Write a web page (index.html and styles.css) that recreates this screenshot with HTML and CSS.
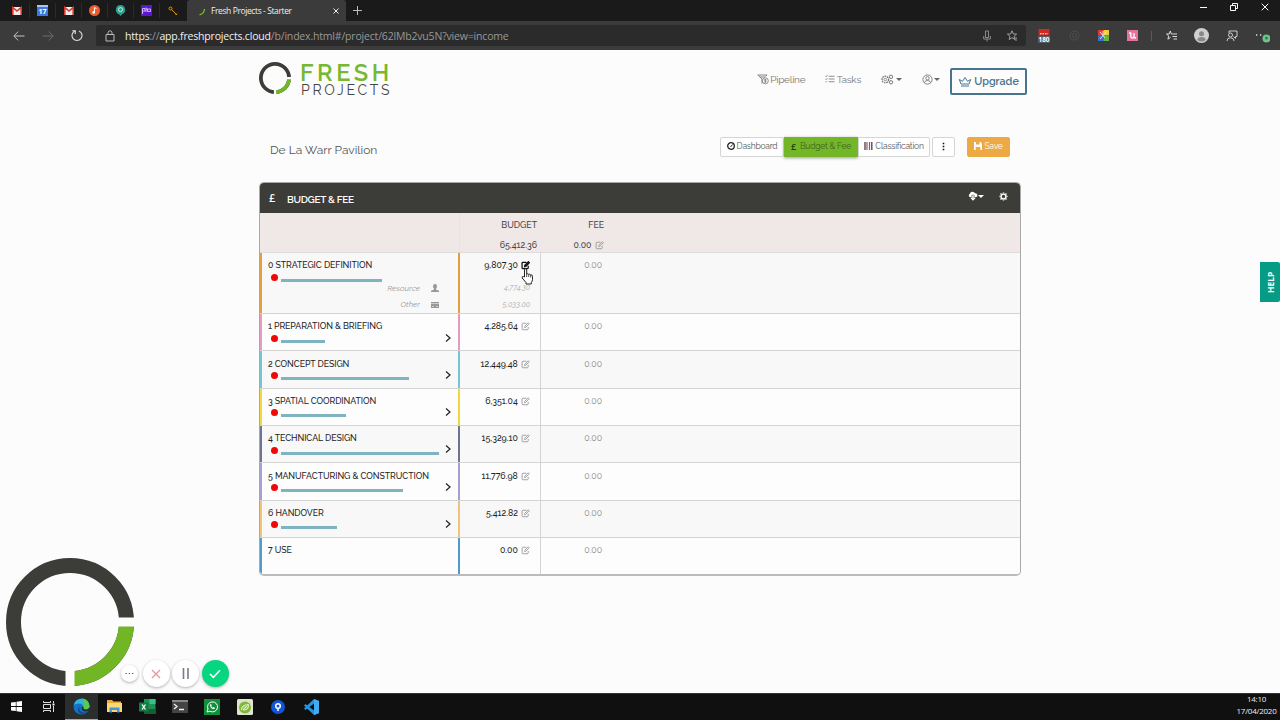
FILE: index.html
```html
<!DOCTYPE html>
<html lang="en">
<head>
<meta charset="utf-8">
<title>Fresh Projects - Starter</title>
<link rel="stylesheet" href="styles.css">
</head>
<body>
<svg width="0" height="0" class="defs">
  <symbol id="edit" viewBox="0 0 10 10"><path d="M6 1.4H2.2Q1.2 1.4 1.2 2.4V7.6Q1.2 8.6 2.2 8.6H7Q8 8.6 8 7.6V5.4M4 6.2L4.2 4.8L8.2.8L9.3 1.9L5.3 5.9Z" fill="none" stroke="currentColor"/></symbol>
  <symbol id="chev" viewBox="0 0 6 8"><path d="M1 .5L5 4L1 7.5" fill="none" stroke="#222" stroke-width="1.2"/></symbol>
  <symbol id="ring" viewBox="0 0 128 128"><circle cx="64" cy="64" r="56.5" fill="none" stroke="#3c3c39" stroke-width="15"/><path d="M120.500 64A56.500 56.500 0 0 1 64 120.500" fill="none" stroke="#72b626" stroke-width="15"/><path d="M64 64H129M64 64V129" stroke="#fcfcfc" stroke-width="9"/></symbol>
  <symbol id="mail" viewBox="0 0 10 10"><path d="M0 1H10V9H0Z" fill="#eee"/><path d="M.8 9V1.500L5 5L9.200 1.500V9" fill="none" stroke="#d8382c" stroke-width="1.600"/></symbol>
</svg>

<div class="tabs">
  <div class="pin"><svg width="10" height="10"><use href="#mail"/></svg></div>
  <div class="pin"><svg width="11" height="11" viewBox="0 0 11 11"><path d="M0 0H11V11H0Z" fill="#3b78e0"/><path d="M0 0H11V2H0Z" fill="#a9c5f5"/><text x="5.500" y="9" font-size="7" font-weight="bold" text-anchor="middle" fill="#fff">17</text></svg></div>
  <div class="pin"><svg width="10" height="10"><use href="#mail"/></svg></div>
  <div class="pin"><svg width="11" height="11" viewBox="0 0 11 11"><circle cx="5.500" cy="5.500" r="5.500" fill="#f15a29"/><path d="M5.500 7.500V2.500L7.500 3.500" stroke="#fff" fill="none"/><circle cx="4.700" cy="7.400" r="1.300" fill="#fff"/></svg></div>
  <div class="pin"><svg width="11" height="11" viewBox="0 0 11 11"><path d="M5.500 0A4.800 4.800 0 0 1 7 9.300L5.500 11L4 9.300A4.800 4.800 0 0 1 5.500 0Z" fill="#2aa18d"/><circle cx="5.500" cy="4.600" r="2" fill="none" stroke="#c8eee6"/></svg></div>
  <div class="pin"><svg width="11" height="11" viewBox="0 0 11 11"><path d="M0 0H11V11H0Z" fill="#5a17cf"/><path d="M1.500 9V3.500H4V6H1.500M5 7V2.500M5 4H9.500V6.500H6.500V4" fill="none" stroke="#d9c4ff" stroke-width=".9"/></svg></div>
  <div class="pin"><svg width="10" height="10" viewBox="0 0 10 10"><circle cx="2.500" cy="2.500" r="1.500" fill="none" stroke="#d99a1c"/><path d="M3.600 3.600L9 9M7.500 9L9 7.500" stroke="#d99a1c" fill="none"/></svg></div>
  <div class="tab">
    <svg width="8" height="10" viewBox="0 0 8 10"><path d="M6.500 3Q6.500 7.500 1.500 8.800" fill="none" stroke="#76b82a" stroke-width="1.300"/></svg>
    <span class="tab-title">Fresh Projects - Starter</span>
    <svg class="tab-x" width="6" height="6" viewBox="0 0 6 6"><path d="M.5 .5L5.500 5.500M5.500 .5L.5 5.500" stroke="#eee"/></svg>
  </div>
  <svg class="plus" width="9" height="9" viewBox="0 0 9 9"><path d="M4.500 0V9M0 4.500H9" stroke="#bbb"/></svg>
  <div class="win">
    <svg width="7" height="8" viewBox="0 0 7 8"><path d="M0 4.500H7" stroke="#fff"/></svg>
    <svg width="8" height="8" viewBox="0 0 8 8"><path d="M.5 2.500H5.500V7.500H.5ZM2.500 2.500V.5H7.500V5.500H5.500" fill="none" stroke="#fff"/></svg>
    <svg width="8" height="8" viewBox="0 0 8 8"><path d="M.7 .7L7.300 7.300M7.300 .7L.7 7.300" stroke="#fff"/></svg>
  </div>
</div>

<div class="toolbar">
  <svg class="back" width="12" height="10" viewBox="0 0 12 10"><path d="M11.500 5H1M5.200 .6L.8 5L5.200 9.400" fill="none" stroke="#c4c4c4"/></svg>
  <svg class="fwd" width="12" height="10" viewBox="0 0 12 10"><path d="M.5 5H11M6.800 .6L11.200 5L6.800 9.400" fill="none" stroke="#6e6e6e"/></svg>
  <svg class="reload" width="12" height="13" viewBox="0 0 12 13"><path d="M4 1.900A5 5 0 1 0 8 1.900M4.300 5V1.700H1.300" fill="none" stroke="#ddd" stroke-width="1.100"/></svg>
  <div class="address">
    <svg width="10" height="12" viewBox="0 0 10 12"><path d="M1 4.500H9V11H1ZM3 4.500V2.800A2 2 0 0 1 7 2.800V4.500" fill="none" stroke="#bbb"/></svg>
    <span class="url"><b>https</b>://<b>app.freshprojects.cloud</b>/b/index.html#/project/62lMb2vu5N?view=income</span>
    <svg class="mic" width="8" height="12" viewBox="0 0 8 12"><path d="M2.500 1H5.500V7.500H2.500ZM.7 6V9H7.300V6M4 9V11.500" fill="none" stroke="#8a8a8a"/></svg>
    <svg class="star" width="11" height="11" viewBox="0 0 11 11"><path d="M5 .8L6.300 3.900L9.600 4.100L7.100 6.300L7.800 9.500L5 7.700L2.200 9.500L2.900 6.300L.4 4.100L3.700 3.900ZM9 7V11" fill="none" stroke="#aaa" stroke-width=".9"/></svg>
  </div>
  <div class="ext">
    <svg width="14" height="16" viewBox="0 0 14 16"><path d="M1.500 1H12.500V7H1.500Z" fill="#cf2a22"/><path d="M3 5.800H11" stroke="#fff" stroke-dasharray="1.500 1"/><path d="M1 7.500H13V15H1Z" fill="#5a5a5a"/><text x="7" y="13.700" font-size="6.500" font-weight="bold" text-anchor="middle" fill="#fff">180</text></svg>
    <svg width="11" height="11" viewBox="0 0 11 11"><circle cx="5.500" cy="5.500" r="4.500" fill="none" stroke="#505050"/><circle cx="5.500" cy="5.500" r="2" fill="none" stroke="#505050"/></svg>
    <svg width="11" height="11" viewBox="0 0 11 11"><path d="M0 0H5.500V5.500H0Z" fill="#e33b34"/><path d="M5.500 0H11V5.500H5.500Z" fill="#f4ca3a"/><path d="M0 5.500H5.500V11H0Z" fill="#3f6fd0"/><path d="M5.500 5.500H11V11H5.500Z" fill="#63b345"/><path d="M2 2L7 8M8.500 1.500L2 9M5 1V5" stroke="#eee" stroke-width=".9"/></svg>
    <svg width="11" height="11" viewBox="0 0 11 11"><path d="M0 0H11V11H0Z" fill="#e3739c"/><path d="M2 3H3.800V6Q3.800 8 5.300 8Q7 8 7 6V3M7 7.500L9 8" fill="none" stroke="#fff" stroke-width="1.300"/></svg>
  </div>
  <div class="sep"></div>
  <div class="ext2">
    <svg width="11" height="11" viewBox="0 0 11 11"><path d="M6.500 4H5.300L4.300 1L3.200 4H.5L2.700 6L1.900 9.200L4.500 7.400M6.500 4H11M6.500 6.500H11M7.500 9H11" fill="none" stroke="#ddd"/></svg>
    <svg width="15" height="15" viewBox="0 0 15 15"><circle cx="7.500" cy="7.500" r="7.500" fill="#cfcfcf"/><circle cx="7.500" cy="5.800" r="2.500" fill="#888"/><path d="M3.200 12Q3.500 9 7.500 9T11.800 12Q7.500 15 3.200 12" fill="#888"/></svg>
    <svg width="12" height="12" viewBox="0 0 12 12"><path d="M3 3V1H11V6.500H9.500V8.500L7.500 6.500" fill="none" stroke="#ccc"/><circle cx="4.500" cy="5" r="2" fill="none" stroke="#ccc"/><path d="M1 11Q1 7.800 4.500 7.800T8 11" fill="none" stroke="#ccc"/></svg>
    <svg width="15" height="15" viewBox="0 0 15 15"><path d="M1 7H7" stroke="#ddd" stroke-width="1.300" stroke-dasharray="1.300 2.700"/><circle cx="11.500" cy="10.500" r="4" fill="#6fc48c"/><circle cx="11.500" cy="10" r="1.500" fill="#33804d"/></svg>
  </div>
</div>

<main class="page">
  <header class="top">
    <svg class="logo-ring" width="32" height="32"><use href="#ring"/></svg>
    <div class="logo-text"><div class="fresh">FRESH</div><div class="projects">PROJECTS</div></div>
    <nav class="nav">
      <span class="nav-item pipeline"><svg width="12" height="11" viewBox="0 0 12 11"><path d="M5 9.500V5L.8 1H10L8.500 2.700M3 3H8" fill="none" stroke="#777" stroke-width=".9"/><circle cx="8.300" cy="6.800" r="3" fill="none" stroke="#777" stroke-width=".8"/><path d="M9.300 5.500H7.700V6.700H9V8H7.300M8.300 4.800V8.800" fill="none" stroke="#777" stroke-width=".7"/></svg><span>Pipeline</span></span>
      <span class="nav-item tasks"><svg width="10" height="10" viewBox="0 0 11 10"><path d="M4 2H10.500M4 5H10.500M4 8H10.500M.3 1.500L1.200 2.500L2.800 .8M.3 4.700L1.200 5.700L2.800 4M.5 8H2" fill="none" stroke="#777" stroke-width=".9"/></svg><span>Tasks</span></span>
      <span class="nav-item gears"><svg width="13" height="11" viewBox="0 0 13 11"><circle cx="4.300" cy="5.500" r="3.300" fill="none" stroke="#777" stroke-width="1.300" stroke-dasharray="1.700 .7"/><circle cx="4.300" cy="5.500" r="1.300" fill="none" stroke="#777" stroke-width=".8"/><circle cx="10" cy="2.800" r="1.700" fill="none" stroke="#777"/><circle cx="10" cy="8.300" r="1.700" fill="none" stroke="#777"/></svg><i class="caret"></i></span>
      <span class="nav-item user"><svg width="11" height="11" viewBox="0 0 11 11"><circle cx="5.500" cy="5.500" r="4.600" fill="none" stroke="#777" stroke-width=".9"/><circle cx="5.500" cy="4.200" r="1.700" fill="none" stroke="#777" stroke-width=".9"/><path d="M2.500 8.700Q2.800 6.500 5.500 6.500T8.500 8.700" fill="none" stroke="#777" stroke-width=".9"/></svg><i class="caret"></i></span>
      <span class="upgrade"><svg width="14" height="11" viewBox="0 0 14 11"><path d="M3 8L1.300 3.500L4.500 5.300L7 1.500L9.500 5.300L12.700 3.500L11 8ZM3 10H11" fill="none" stroke="#48748f"/></svg>Upgrade</span>
    </nav>
  </header>

  <section class="heading">
    <h1>De La Warr Pavilion</h1>
    <div class="group">
      <span class="btn dash"><svg width="8" height="8" viewBox="0 0 8 8"><circle cx="4" cy="4" r="3.300" fill="none" stroke="#222" stroke-width="1.300"/><path d="M3.500 5L5.500 2.500" stroke="#222"/></svg>Dashboard</span>
      <span class="btn active"><b>£</b>Budget &amp; Fee</span>
      <span class="btn class"><svg width="9" height="8" viewBox="0 0 9 8"><path d="M1 0V8M7.800 0V8" stroke="#444" stroke-width="1.300"/><path d="M3 0V8M5.500 0V8" stroke="#a0506c" stroke-width="1.200"/></svg>Classification</span>
    </div>
    <span class="btn more"><svg width="3" height="9" viewBox="0 0 3 9"><path d="M.7 .7H2.300V2.300H.7ZM.7 3.700H2.300V5.300H.7ZM.7 6.700H2.300V8.300H.7Z" fill="#111"/></svg></span>
    <span class="btn save"><svg width="8" height="8" viewBox="0 0 8 8"><path d="M0 0H6.500L8 1.500V8H0Z" fill="#fff"/><path d="M2 0H5.500V2.500H2ZM1.700 5H6.300V8H1.700Z" fill="#eca944"/></svg>Save</span>
  </section>

  <section class="panel">
    <div class="panel-head">
      <b class="pound">£</b><h2>BUDGET &amp; FEE</h2>
      <svg class="cloud" width="10" height="10" viewBox="0 0 10 10"><path d="M2.200 6.300A1.800 1.800 0 0 1 1.700 3A2.800 2.800 0 0 1 7 2.300A2 2 0 0 1 7.800 6.300Z" fill="#fff"/><path d="M5 5V9M3 6.800L5 8.900L7 6.800" stroke="#fff" fill="none" stroke-width="1.200"/><path d="M5 3.500V5.500M3 5H4M6 5H7" stroke="#3c3c39" stroke-width=".8"/></svg><i class="caret light"></i>
      <svg class="cog" width="9" height="9" viewBox="0 0 9 9"><circle cx="4.500" cy="4.500" r="2.400" fill="none" stroke="#fff" stroke-width="1.400"/><path d="M4.500 .5V1.500M4.500 7.500V8.500M.5 4.500H1.500M7.500 4.500H8.500M1.500 1.500L2.300 2.300M6.700 6.700L7.500 7.500M7.500 1.500L6.700 2.300M2.300 6.700L1.500 7.500" stroke="#fff" stroke-width="1.500"/></svg>
    </div>
    <div class="row totals">
      <div class="name"></div>
      <div class="budget"><div>BUDGET</div><div>65,412.36</div></div>
      <div class="fee"><div>FEE</div><div>0.00 <svg class="edit"><use href="#edit"/></svg></div></div>
    </div>
    <div class="row first c0">
      <div class="name"><div class="label">0 STRATEGIC DEFINITION</div><div class="meter"><i class="dot"></i><i class="bar" style="width:101px"></i></div>
        <div class="sub">Resource <svg width="8" height="8" viewBox="0 0 8 8"><path d="M4 0Q6 0 6 2.300Q6 4 5 4.800V5.500L8 6.700V8H0V6.700L3 5.500V4.800Q2 4 2 2.300Q2 0 4 0Z" fill="#999"/></svg></div>
        <div class="sub">Other <svg width="8" height="8" viewBox="0 0 8 8"><path d="M0 1H8V7H0Z" fill="#999"/><path d="M0 2.500H8M1 5.500H3M5 5.500H7" stroke="#eee" stroke-width=".6"/></svg></div></div>
      <div class="budget"><div class="num">9,807.30 <svg class="edit dark"><use href="#edit"/></svg></div><div class="subnum">4,774.30</div><div class="subnum">5,033.00</div>
        <svg class="cursor" width="14" height="17" viewBox="0 0 14 17"><path d="M3.500 9V2Q3.500 .8 4.600 .8T5.700 2V6Q6.500 5.200 7.700 6.300Q8.800 5.700 9.700 6.900Q11.500 6.500 11.500 8.500V11.500Q11.300 13.500 10.300 14.500V16H5V14.500L1.200 10Q.8 8.300 2.300 8.500Z" fill="#fff" stroke="#222"/><path d="M5.700 6V9M7.700 6.500V9M9.700 7V9.500" stroke="#222" stroke-width=".8"/></svg></div>
      <div class="fee">0.00</div>
    </div>
    <div class="row c1"><div class="name"><div class="label">1 PREPARATION &amp; BRIEFING</div><div class="meter"><i class="dot"></i><i class="bar" style="width:44px"></i></div><svg class="chev"><use href="#chev"/></svg></div><div class="budget"><div class="num">4,285.64 <svg class="edit"><use href="#edit"/></svg></div></div><div class="fee">0.00</div></div>
    <div class="row c2"><div class="name"><div class="label">2 CONCEPT DESIGN</div><div class="meter"><i class="dot"></i><i class="bar" style="width:128px"></i></div><svg class="chev"><use href="#chev"/></svg></div><div class="budget"><div class="num">12,449.48 <svg class="edit"><use href="#edit"/></svg></div></div><div class="fee">0.00</div></div>
    <div class="row c3"><div class="name"><div class="label">3 SPATIAL COORDINATION</div><div class="meter"><i class="dot"></i><i class="bar" style="width:65px"></i></div><svg class="chev"><use href="#chev"/></svg></div><div class="budget"><div class="num">6,351.04 <svg class="edit"><use href="#edit"/></svg></div></div><div class="fee">0.00</div></div>
    <div class="row c4"><div class="name"><div class="label">4 TECHNICAL DESIGN</div><div class="meter"><i class="dot"></i><i class="bar" style="width:158px"></i></div><svg class="chev"><use href="#chev"/></svg></div><div class="budget"><div class="num">15,329.10 <svg class="edit"><use href="#edit"/></svg></div></div><div class="fee">0.00</div></div>
    <div class="row c5"><div class="name"><div class="label">5 MANUFACTURING &amp; CONSTRUCTION</div><div class="meter"><i class="dot"></i><i class="bar" style="width:122px"></i></div><svg class="chev"><use href="#chev"/></svg></div><div class="budget"><div class="num">11,776.98 <svg class="edit"><use href="#edit"/></svg></div></div><div class="fee">0.00</div></div>
    <div class="row c6"><div class="name"><div class="label">6 HANDOVER</div><div class="meter"><i class="dot"></i><i class="bar" style="width:56px"></i></div><svg class="chev"><use href="#chev"/></svg></div><div class="budget"><div class="num">5,412.82 <svg class="edit"><use href="#edit"/></svg></div></div><div class="fee">0.00</div></div>
    <div class="row c7"><div class="name"><div class="label">7 USE</div></div><div class="budget"><div class="num">0.00 <svg class="edit"><use href="#edit"/></svg></div></div><div class="fee">0.00</div></div>
  </section>

  <div class="help">HELP</div>
  <svg class="big-ring" width="128" height="128"><use href="#ring"/></svg>
  <div class="recorder">
    <span class="rec small"><svg width="9" height="3" viewBox="0 0 9 3"><path d="M.5 1.500H8.500" stroke="#555" stroke-width="1.200" stroke-dasharray="1.300 2"/></svg></span>
    <span class="rec"><svg width="10" height="10" viewBox="0 0 10 10"><path d="M1 1L9 9M9 1L1 9" stroke="#eb9a9a" stroke-width="1.400"/></svg></span>
    <span class="rec"><svg width="8" height="11" viewBox="0 0 8 11"><path d="M1.500 0V11M6 0V11" stroke="#777c88" stroke-width="1.600"/></svg></span>
    <span class="rec ok"><svg width="12" height="10" viewBox="0 0 12 10"><path d="M1 5L4.300 8.300L11 1.300" fill="none" stroke="#fff" stroke-width="1.600"/></svg></span>
  </div>
</main>

<footer class="taskbar">
  <div class="app"><svg width="11" height="11" viewBox="0 0 11 11"><path d="M0 1.500L4.800 .9V5.100H0ZM5.500 .8L11 0V5.100H5.500ZM0 5.900H4.800V10.100L0 9.500ZM5.500 5.900H11V11L5.500 10.200Z" fill="#fff"/></svg></div>
  <div class="app"><svg width="12" height="11" viewBox="0 0 12 11"><path d="M.5 0V1.500H7.500V0M.5 3.500H7.500V7.500H.5ZM.5 11V9.500H7.500V11M10.500 0V2M10.500 5V11" fill="none" stroke="#ddd"/><path d="M9.500 2.500H11.500V4.500H9.500Z" fill="#fff"/></svg></div>
  <div class="app open"><svg width="17" height="17" viewBox="0 0 17 17"><circle cx="8.500" cy="8.500" r="8" fill="#1673c4"/><path d="M.7 7A8 8 0 0 1 16.500 8.500Q16 11.500 12.500 11.500Q10 11.500 10.500 9.500Q10 5.500 6 5.500Q2.500 5.500 .7 7Z" fill="#32b5dc"/><path d="M9 .5Q16 1 16.500 8.500Q16 11.500 12.500 11.500Q10 11.500 10.500 9.500Q12 5 9 .5Z" fill="#5bc94c"/><path d="M7 7Q5 11 8 13.500Q11 15.500 15 13Q11 17 7 15.500Q3 13 7 7Z" fill="#104a91"/><path d="M10.500 9Q9.500 11.300 13 11.600Q15.500 11.500 16.400 9.500L17 12L14.500 13Q9 14.500 8.500 10Q9 8 10.500 9Z" fill="#2c2d2d"/></svg></div>
  <div class="app"><svg width="15" height="13" viewBox="0 0 15 13"><path d="M0 0H5L6.500 1.500H14V12H0Z" fill="#e8ad3b"/><path d="M0 3H15V12H0Z" fill="#fbd775"/><path d="M2.500 12.500V7.500H12.500V12.500H10V10H5V12.500Z" fill="#4199da"/></svg></div>
  <div class="app"><svg width="17" height="15" viewBox="0 0 17 15"><path d="M5 0H16.500V15H5Z" fill="#1e8f55"/><path d="M10.500 0H16.500V5H10.500Z" fill="#35c481"/><path d="M10.500 10H16.500V15H5V10Z" fill="#185c37"/><path d="M0 3.500H9.500V12.500H0Z" fill="#107c41"/><path d="M3 5.500L6.500 10.500M6.500 5.500L3 10.500" stroke="#fff" stroke-width="1.300"/></svg></div>
  <div class="app"><svg width="16" height="13" viewBox="0 0 16 13"><path d="M0 0H16V13H0Z" fill="#444"/><path d="M0 0H16V2H0Z" fill="#888"/><path d="M2 4L5 6.500L2 9M7 9.500H12" fill="none" stroke="#eee" stroke-width="1.300"/></svg></div>
  <div class="app"><svg width="16" height="16" viewBox="0 0 16 16"><path d="M0 0H16V16H0Z" fill="#118f3d"/><path d="M3 13L4 10A5 5 0 1 1 6 12.200Z" fill="none" stroke="#fff"/><path d="M6 5.500Q6 9.500 10 10.200L11 9L9.500 8L8.500 8.700L7.300 7.300L7.700 6.300L7 5Z" fill="#fff"/></svg></div>
  <div class="app"><svg width="16" height="16" viewBox="0 0 16 16"><rect width="16" height="16" rx="1.500" fill="#dfe6cc"/><circle cx="8" cy="8.500" r="6" fill="#7fb83a"/><path d="M4.500 11Q4 6 11.500 5.500Q12 11.500 6 11Q8 8.500 9.500 7.500" fill="#a5cf67" stroke="#e8f3d2" stroke-width=".9"/></svg></div>
  <div class="app"><svg width="14" height="14" viewBox="0 0 14 14"><circle cx="7" cy="7" r="7" fill="#1155d9"/><circle cx="7" cy="6" r="2.300" fill="none" stroke="#fff" stroke-width="1.500"/><path d="M7 8V11" stroke="#fff" stroke-width="1.500"/></svg></div>
  <div class="app"><svg width="16" height="16" viewBox="0 0 16 16"><path d="M11 0L16 2V14L11 16L1 6.500L2.500 5L11 11.500V4.500L2.500 11L1 9.500Z" fill="#2595df"/><path d="M11 0L16 2V14L11 16Z" fill="#42acf0"/></svg></div>
  <div class="clock"><div>14:10</div><div>17/04/2020</div></div>
</footer>
</body>
</html>
```
FILE: styles.css
```css
* { box-sizing: border-box; }
body { margin: 0; width: 1280px; height: 720px; overflow: hidden; display: flex; flex-direction: column; background: #fcfcfc; font-family: Raleway, Lato, sans-serif; color: #333; }
svg { display: block; flex: none; }
.defs { position: absolute; }

.tabs { height: 21px; background: #1a1a1a; display: flex; align-items: center; padding-left: 4px; font-family: "Open Sans", sans-serif; }
.pin { width: 26px; height: 15px; display: flex; align-items: center; justify-content: center; border-right: 1px solid #2b2b2b; }
.pin:nth-child(7) { border: 0; }
.tab { width: 159px; height: 21px; margin-left: 1px; background: #3b3b3b; border-radius: 3px 3px 0 0; display: flex; align-items: center; padding: 0 7px 0 11px; }
.tab-title { margin-left: 5px; font-size: 8.500px; line-height: 20px; color: #eee; white-space: nowrap; letter-spacing: -.4px; }
.tab-x { margin-left: auto; }
.plus { margin-left: 7px; }
.win { margin-left: auto; display: flex; align-items: center; gap: 23px; padding: 0 11px 7px 0; }

.toolbar { height: 29px; background: #3b3b3b; display: flex; align-items: center; font-family: "Open Sans", sans-serif; }
.back { margin-left: 13px; }
.fwd { margin-left: 17px; }
.reload { margin-left: 17px; }
.address { margin-left: 13px; width: 930px; height: 21px; background: #2b2b2b; border-radius: 2px; display: flex; align-items: center; padding: 0 8px 0 9px; }
.url { margin-left: 10px; font-size: 10.500px; line-height: 20px; color: #999; white-space: nowrap; letter-spacing: -.18px; }
.url b { font-weight: 400; color: #f2f2f2; }
.mic { margin-left: auto; }
.star { margin-left: 16px; }
.ext { margin-left: 11px; display: flex; align-items: center; gap: 18px; }
.sep { width: 1px; height: 10px; background: #5a5a5a; margin-left: 13px; }
.ext2 { margin-left: 14px; display: flex; align-items: center; gap: 17px; }

.page { height: 643px; position: relative; background: #fcfcfc; }
.top { margin-left: 259px; width: 768px; height: 46px; padding-top: 12px; display: flex; align-items: flex-start; }
.logo-text { margin-left: 9px; width: 100px; padding-top: 1px; }
.fresh { font-size: 23.500px; line-height: 20px; font-weight: 600; letter-spacing: 3.500px; color: #76b82f; }
.projects { font-size: 14px; line-height: 14px; letter-spacing: 2.700px; color: #444; padding-left: 1px; }
.nav { margin-left: auto; display: flex; align-items: flex-start; padding-top: 5px; font-size: 10px; color: #777; }
.nav-item { display: flex; align-items: center; gap: 1.500px; height: 24px; letter-spacing: -.25px; }
.tasks, .gears, .user { margin-left: 20px; }
.gears, .user { gap: 1px; }
.caret { border: 3px solid transparent; border-top-color: #666; border-bottom: 0; margin-left: 1px; }
.user .caret { margin-left: 0; }
.upgrade { margin: 1px 0 0 10px; width: 77px; height: 27px; border: 2px solid #48748f; border-radius: 2px; color: #48748f; font-size: 10.700px; font-weight: 600; display: flex; align-items: center; justify-content: center; gap: 2px; }

.heading { margin: 37px 0 0 260px; width: 761px; height: 28px; display: flex; align-items: center; font-size: 8.500px; padding-bottom: 1px; letter-spacing: -.22px; }
h1 { margin: 6px auto 0 10px; font-size: 12px; line-height: 16px; font-weight: 400; color: #555; letter-spacing: 0; }
.group { display: flex; width: 210px; height: 20px; }
.btn { height: 20px; display: flex; align-items: center; justify-content: center; gap: 2px; border: 1px solid #d5d5d5; border-radius: 2px; background: #fff; color: #555; white-space: nowrap; padding-bottom: 1px; }
.dash { width: 64px; }
.active { width: 74px; background: #73b729; border-color: #73b729; border-radius: 0; color: #3d641a; box-shadow: 0 1px 3px #999; gap: 4px; }
.active b { font: 600 9px "Open Sans", sans-serif; color: #234008; }
.class { width: 72px; }
.more { width: 23px; margin-left: 2px; }
.save { width: 43px; margin: 0 11px 0 12px; background: #eca944; border-color: #eca944; color: #fff; }

.panel { margin: 21px 0 0 259px; width: 762px; height: 394px; border: 1px solid #a9a9a9; border-bottom: 2px solid #b9bbbd; border-radius: 5px; overflow: hidden; background: #fcfcfc; }
.panel-head { height: 30px; background: #3c3c39; color: #fff; display: flex; align-items: center; padding-left: 9px; }
.pound { font: 600 11px "Open Sans", sans-serif; width: 18px; margin-top: -1px; }
h2 { margin: 2px auto 0 0; font-size: 10px; font-weight: 600; letter-spacing: -.3px; }
.light { border-top-color: #fff; margin-left: 0; }
.cloud, .light { margin-bottom: 4px; }
.cog { margin: 0 12px 3px 15px; }
.row { height: 37.330px; display: flex; border-bottom: 1px solid #d4d4d4; font-size: 8.750px; }
.row:nth-child(odd) { background: #f8f8f8; }
.row:last-child { border: 0; }
.totals.row { height: 40px; background: #f0e8e6; color: #444; border-color: #ddd; font-weight: 500; }
.first.row { height: 61px; background: #f8f8f8; }
.row:nth-child(4), .row:nth-child(6), .row:nth-child(8), .row:nth-child(10) { background: #fdfdfd; }
.name { width: 200px; border: 2px solid var(--c); border-width: 0 2px; padding: 6.200px 0 0 6px; position: relative; }
.totals .name { border: 0; border-right: 1px solid #e9e2e4; }
.label { line-height: 13px; color: #222; white-space: nowrap; font-weight: 500; letter-spacing: -.06px; }
.meter { display: flex; padding-left: 3px; height: 10px; margin-top: 1.400px; }
.dot { width: 7px; height: 7px; border-radius: 50%; background: #ee0808; }
.bar { height: 3px; margin: 5px 0 0 3px; background: #7eb3bf; }
.chev { position: absolute; right: 7px; top: 19.500px; width: 6px; height: 8px; }
.budget { width: 81px; border-right: 1px solid #d4d4d4; text-align: right; padding: 6.200px 9.700px 0 0; position: relative; color: #222; }
.totals .budget { border: 0; padding: 5px 4px 0 0; color: #444; }
.totals .budget div, .totals .fee div { height: 20px; line-height: 14px; display: flex; justify-content: flex-end; align-items: flex-start; }
.num { display: flex; justify-content: flex-end; align-items: center; line-height: 13px; font-weight: 500; }
.edit { width: 9px; height: 9px; margin-left: 3.500px; color: #999; }
.totals .edit { margin-top: 3px; }
.edit.dark { color: #111; stroke-width: 1.400; }
.fee { width: 61px; text-align: right; padding-top: 6.200px; line-height: 13px; color: #888; }
.totals .fee { width: 63px; padding-top: 5px; color: #444; }
.sub { display: flex; justify-content: flex-end; align-items: center; gap: 11px; padding-right: 19px; height: 16.500px; font-size: 7.900px; font-style: italic; color: #999; }
.meter + .sub { margin-top: -3.500px; }
.subnum { height: 16.500px; font-size: 7.500px; line-height: 16.500px; font-style: italic; color: #aaa; }
.num + .subnum { margin-top: 8px; }
.cursor { position: absolute; left: 61px; top: 15px; }
.c0 { --c: #e3a043; } .c1 { --c: #e49bc0; } .c2 { --c: #79c4d2; } .c3 { --c: #f1d83b; }
.c4 { --c: #6d7391; } .c5 { --c: #a3a0d2; } .c6 { --c: #f0c37a; } .c7 { --c: #4f9ccb; }

.help { position: absolute; right: 0; top: 212px; width: 20px; height: 40px; background: #059b85; color: #fff; font: bold 8.500px "Open Sans", sans-serif; border-radius: 2px 0 0 2px; writing-mode: vertical-rl; transform: rotate(180deg); display: flex; align-items: center; justify-content: center; }
.big-ring { position: absolute; left: 6px; top: 508px; }
.recorder { position: absolute; left: 121px; top: 610px; display: flex; align-items: center; gap: 2.500px; }
.rec { width: 27px; height: 27px; border-radius: 50%; background: #fff; box-shadow: 0 1px 3px rgba(0,0,0,.3); display: flex; align-items: center; justify-content: center; }
.rec.small { width: 17px; height: 17px; margin-right: 2px; }
.ok.rec { background: #06d67f; }

.taskbar { height: 27px; background: #101010; border-top: 1px solid #333; display: flex; font-family: "Open Sans", sans-serif; }
.app { width: 32.700px; display: flex; align-items: center; justify-content: center; padding-bottom: 1px; }
.open { background: #2c2d2d; border-bottom: 1px solid #72c49b; padding-bottom: 0; }
.clock { margin: -1px 4px 0 auto; color: #eee; font-size: 8px; line-height: 12px; width: 39px; display: flex; flex-direction: column; align-items: center; letter-spacing: -.25px; }
```
